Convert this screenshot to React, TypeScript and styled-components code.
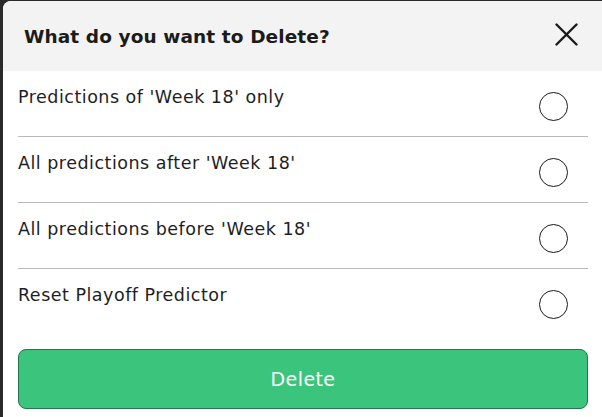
import React from "react";
import styled, { createGlobalStyle } from "styled-components";

const Global = createGlobalStyle`
  html, body { margin: 0; padding: 0; background: #ffffff; }
  body { font-family: "DejaVu Sans", "Liberation Sans", sans-serif; color: #1f1f1f; }
`;

const Frame = styled.div`
  width: 602px;
  height: 417px;
  overflow: hidden;
  background: #2a2a2a;
  padding: 1px 0 0 3px;
  box-sizing: border-box;
`;

const Modal = styled.div`
  background: #ffffff;
  border-top-left-radius: 8px;
  height: 100%;
  display: flex;
  flex-direction: column;
  overflow: hidden;
`;

const Header = styled.div`
  height: 70px;
  flex: none;
  background: #f3f3f3;
  display: flex;
  align-items: center;
  justify-content: space-between;
  padding: 0 24px 0 21px;
`;

const Title = styled.h2`
  margin: 0;
  font-size: 18.5px;
  font-weight: 700;
  letter-spacing: 0.1px;
  color: #1b1b1b;
`;

const CloseButton = styled.button`
  border: none;
  background: transparent;
  padding: 0;
  width: 24px;
  height: 24px;
  display: flex;
  align-items: center;
  justify-content: center;
  cursor: pointer;
  margin-top: -4px;
`;

const Body = styled.div`
  display: flex;
  flex-direction: column;
  padding: 0 14px 0 15px;
`;

const Row = styled.label<{ $last?: boolean }>`
  display: flex;
  justify-content: space-between;
  align-items: flex-start;
  height: 66px;
  box-sizing: border-box;
  padding-top: 14px;
  border-bottom: ${(p) => (p.$last ? "none" : "1px solid #b9b9b9")};
  cursor: pointer;
`;

const RowText = styled.span`
  font-size: 17.5px;
  letter-spacing: 0.5px;
  line-height: 24px;
  color: #1e1e1e;
`;

const Radio = styled.span`
  width: 27px;
  height: 27px;
  border: 1.5px solid #1a1a1a;
  border-radius: 50%;
  margin: 7px 20px 0 0;
  flex: none;
`;

const DeleteButton = styled.button`
  margin: 14px 0 0;
  height: 60px;
  border-radius: 8px;
  border: 1.5px solid #26764a;
  background: #3bc47b;
  color: #ffffff;
  font-family: "DejaVu Sans", "Liberation Sans", sans-serif;
  font-size: 19px;
  letter-spacing: 0.4px;
  cursor: pointer;
`;

const options = [
  "Predictions of 'Week 18' only",
  "All predictions after 'Week 18'",
  "All predictions before 'Week 18'",
  "Reset Playoff Predictor",
];

export default function App() {
  return (
    <>
      <Global />
      <Frame>
        <Modal>
          <Header>
            <Title>What do you want to Delete?</Title>
            <CloseButton aria-label="Close">
              <svg width="23" height="23" viewBox="0 0 23 23">
                <path d="M1.5 1.5 L21.5 21.5 M21.5 1.5 L1.5 21.5" stroke="#1a1a1a" strokeWidth="2.4" strokeLinecap="round" />
              </svg>
            </CloseButton>
          </Header>
          <Body>
            {options.map((o, i) => (
              <Row key={o} $last={i === options.length - 1}>
                <RowText>{o}</RowText>
                <Radio />
              </Row>
            ))}
            <DeleteButton>Delete</DeleteButton>
          </Body>
        </Modal>
      </Frame>
    </>
  );
}
